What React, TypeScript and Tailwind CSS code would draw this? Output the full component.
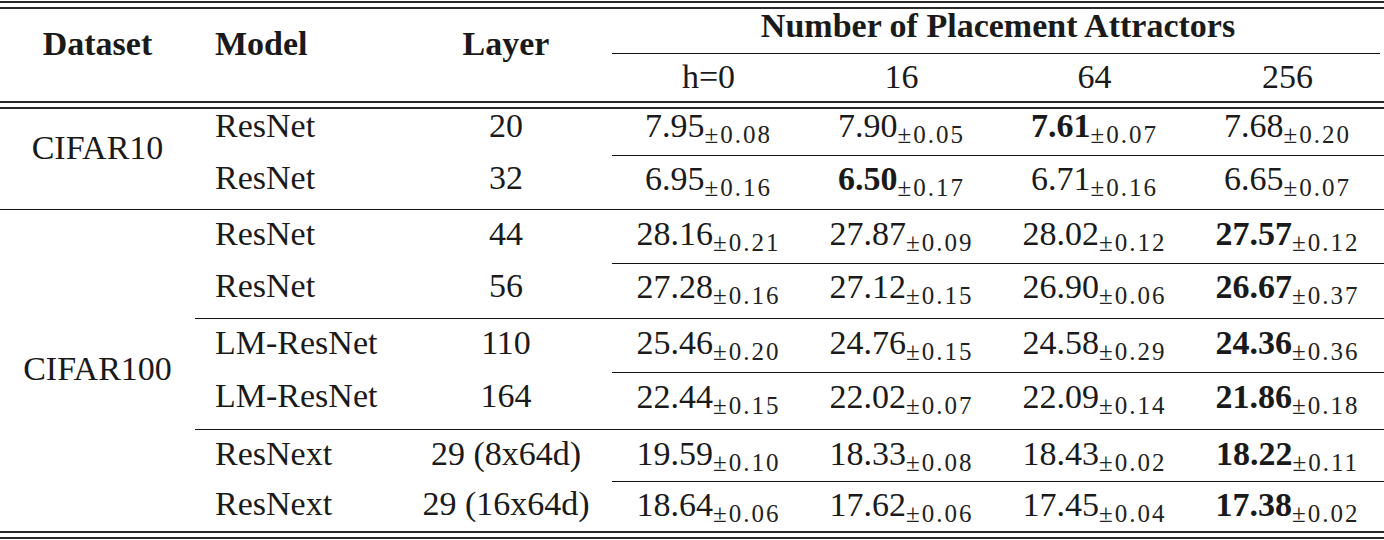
const serif = "font-['Liberation_Serif','Times_New_Roman',serif]";

type Cell = { v: string; pm: string; bold?: boolean };

const rows: { model: string; layer: string; cells: Cell[] }[] = [
  { model: "ResNet", layer: "20", cells: [{ v: "7.95", pm: "0.08" }, { v: "7.90", pm: "0.05" }, { v: "7.61", pm: "0.07", bold: true }, { v: "7.68", pm: "0.20" }] },
  { model: "ResNet", layer: "32", cells: [{ v: "6.95", pm: "0.16" }, { v: "6.50", pm: "0.17", bold: true }, { v: "6.71", pm: "0.16" }, { v: "6.65", pm: "0.07" }] },
  { model: "ResNet", layer: "44", cells: [{ v: "28.16", pm: "0.21" }, { v: "27.87", pm: "0.09" }, { v: "28.02", pm: "0.12" }, { v: "27.57", pm: "0.12", bold: true }] },
  { model: "ResNet", layer: "56", cells: [{ v: "27.28", pm: "0.16" }, { v: "27.12", pm: "0.15" }, { v: "26.90", pm: "0.06" }, { v: "26.67", pm: "0.37", bold: true }] },
  { model: "LM-ResNet", layer: "110", cells: [{ v: "25.46", pm: "0.20" }, { v: "24.76", pm: "0.15" }, { v: "24.58", pm: "0.29" }, { v: "24.36", pm: "0.36", bold: true }] },
  { model: "LM-ResNet", layer: "164", cells: [{ v: "22.44", pm: "0.15" }, { v: "22.02", pm: "0.07" }, { v: "22.09", pm: "0.14" }, { v: "21.86", pm: "0.18", bold: true }] },
  { model: "ResNext", layer: "29 (8x64d)", cells: [{ v: "19.59", pm: "0.10" }, { v: "18.33", pm: "0.08" }, { v: "18.43", pm: "0.02" }, { v: "18.22", pm: "0.11", bold: true }] },
  { model: "ResNext", layer: "29 (16x64d)", cells: [{ v: "18.64", pm: "0.06" }, { v: "17.62", pm: "0.06" }, { v: "17.45", pm: "0.04" }, { v: "17.38", pm: "0.02", bold: true }] },
];

const Rule = () => <div className="h-[2px] bg-[#2a2a2a]" />;

const Value = ({ c }: { c: Cell }) => (
  <span className="whitespace-nowrap">
    <span className={c.bold ? "font-bold" : ""}>{c.v}</span>
    <span className="relative top-[6px] text-[25px] tracking-[2px] text-[#222]">±{c.pm}</span>
  </span>
);

const Row = ({ r, first, h, pt }: { r: (typeof rows)[number]; first: boolean; h: string; pt: string }) => (
  <div className={`grid grid-cols-[205px_212px_repeat(4,193px)] ${h}`}>
    <div className={`pl-[20px] ${pt}`}>{r.model}</div>
    <div className={`text-center ${pt}`}>{r.layer}</div>
    {r.cells.map((c, i) => (
      <div key={i} className={`text-center ${first ? pt : "border-t border-[#111] " + pt}`}>
        <Value c={c} />
      </div>
    ))}
  </div>
);

export default function App() {
  return (
    <div className={`w-[1384px] h-[540px] bg-white text-[#1a1a1a] text-[34px] leading-none ${serif}`}>
      <div className="pt-[1px]">
        <Rule />
        <div className="h-[4px]" />
        <Rule />
      </div>

      {/* header */}
      <div className="grid grid-cols-[195px_205px_212px_772px] h-[92px] font-bold">
        <div className="text-center pt-[18px]">Dataset</div>
        <div className="pl-[20px] pt-[18px]">Model</div>
        <div className="text-center pt-[18px]">Layer</div>
        <div className="flex flex-col">
          <div className="h-[44px] flex items-center justify-center pb-[11px]">Number of Placement Attractors</div>
          <div className="h-px bg-[#111] mr-[4px]" />
          <div className="flex-1 grid grid-cols-4 font-normal">
            {["h=0", "16", "64", "256"].map((t) => (
              <div key={t} className="text-center pt-[6px]">{t}</div>
            ))}
          </div>
        </div>
      </div>

      <Rule />
      <div className="h-[4px]" />
      <Rule />

      {/* CIFAR10 */}
      <div className="grid grid-cols-[195px_1189px]">
        <div className="flex items-center justify-center pb-[22px]">CIFAR10</div>
        <div>
          <Row r={rows[0]} first h="h-[46px]" pt="pt-0" />
          <Row r={rows[1]} first={false} h="h-[54px]" pt="pt-[6px]" />
        </div>
      </div>
      <div className="h-px bg-[#111]" />

      {/* CIFAR100 */}
      <div className="grid grid-cols-[195px_1189px]">
        <div className="flex items-center justify-center pb-[4px]">CIFAR100</div>
        <div>
          <Row r={rows[2]} first h="h-[53px]" pt="pt-[7px]" />
          <Row r={rows[3]} first={false} h="h-[55px]" pt="pt-[6px]" />
          <div className="h-px bg-[#111]" />
          <Row r={rows[4]} first h="h-[53px]" pt="pt-[7px]" />
          <Row r={rows[5]} first={false} h="h-[57px]" pt="pt-[7px]" />
          <div className="h-px bg-[#111]" />
          <Row r={rows[6]} first h="h-[51px]" pt="pt-[7px]" />
          <Row r={rows[7]} first={false} h="h-[50px]" pt="pt-[6px]" />
        </div>
      </div>

      <Rule />
      <div className="h-[4px]" />
      <Rule />
    </div>
  );
}
